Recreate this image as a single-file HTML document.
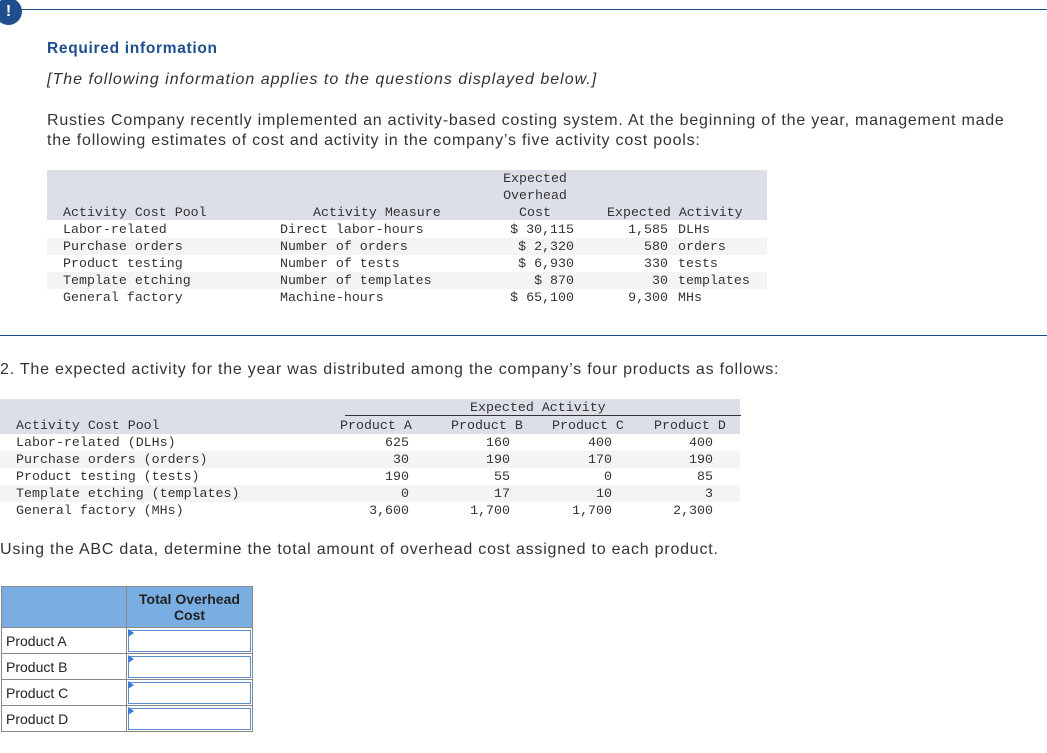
<!DOCTYPE html>
<html><head><style>
body{margin:0;width:1047px;height:753px;position:relative;background:#fff;font-family:"Liberation Sans",sans-serif;color:#333;overflow:hidden}
.a{position:absolute;white-space:nowrap}
.m{font-family:"Liberation Mono",monospace;font-size:13.3px;color:#333;line-height:17px}
.r{text-align:right}
.t{font-size:16px;letter-spacing:0.78px}
</style></head><body>
<div class="a" style="left:20px;top:9px;width:1027px;height:1px;background:#1f4e8c"></div>
<div class="a" style="left:-5px;top:-2px;width:27px;height:27px;border-radius:50%;background:#1f4e8c;color:#fff;font-weight:bold;font-size:16px;text-align:center;line-height:27px">!</div>
<div class="a" style="left:47px;top:40px;font-size:15.5px;font-weight:bold;color:#1f4e8c;letter-spacing:0.7px">Required information</div>
<div class="a t" style="left:47px;top:71px;font-style:italic;letter-spacing:1.0px">[The following information applies to the questions displayed below.]</div>
<div class="a t" style="left:47px;top:111px;line-height:20px">Rusties Company recently implemented an activity-based costing system. At the beginning of the year, management made<br>the following estimates of cost and activity in the company’s five activity cost pools:</div>

<div class="a" style="left:47px;top:170px;width:720px;height:50px;background:#dcdfe8"></div>
<div class="a" style="left:47px;top:238px;width:720px;height:17px;background:#f4f4f4"></div>
<div class="a" style="left:47px;top:272px;width:720px;height:17px;background:#f4f4f4"></div>
<div class="a m" style="left:490px;top:170px;width:90px;text-align:center">Expected<br>Overhead<br>Cost</div>
<div class="a m" style="left:63px;top:204px">Activity Cost Pool<br>Labor-related<br>Purchase orders<br>Product testing<br>Template etching<br>General factory</div>
<div class="a m" style="left:313px;top:204px">Activity Measure</div>
<div class="a m" style="left:280px;top:221px">Direct labor-hours<br>Number of orders<br>Number of tests<br>Number of templates<br>Machine-hours</div>
<div class="a m" style="left:500px;top:221px;width:74px;text-align:right">$ 30,115<br>$ 2,320<br>$ 6,930<br>$ 870<br>$ 65,100</div>
<div class="a m" style="left:607px;top:204px">Expected Activity</div>
<div class="a m" style="left:600px;top:221px;width:68px;text-align:right">1,585<br>580<br>330<br>30<br>9,300</div>
<div class="a m" style="left:678px;top:221px">DLHs<br>orders<br>tests<br>templates<br>MHs</div>

<div class="a" style="left:-10px;top:320px;width:1060px;height:15px;border-bottom:1px solid #1f4e8c;border-left:1px solid #1f4e8c;border-bottom-left-radius:10px"></div>

<div class="a t" style="left:0;top:361px">2. The expected activity for the year was distributed among the company’s four products as follows:</div>

<div class="a" style="left:0;top:399px;width:740px;height:35px;background:#dcdfe8"></div>
<div class="a" style="left:345px;top:415px;width:396px;height:1px;background:#333"></div>
<div class="a" style="left:0;top:451px;width:740px;height:17px;background:#f4f4f4"></div>
<div class="a" style="left:0;top:485px;width:740px;height:17px;background:#f4f4f4"></div>
<div class="a m" style="left:470px;top:399px">Expected Activity</div>
<div class="a m" style="left:16px;top:417px">Activity Cost Pool<br>Labor-related (DLHs)<br>Purchase orders (orders)<br>Product testing (tests)<br>Template etching (templates)<br>General factory (MHs)</div>
<div class="a m" style="left:340px;top:417px">Product A</div>
<div class="a m" style="left:451px;top:417px">Product B</div>
<div class="a m" style="left:552px;top:417px">Product C</div>
<div class="a m" style="left:654px;top:417px">Product D</div>
<div class="a m r" style="left:340px;top:434px;width:69px">625<br>30<br>190<br>0<br>3,600</div>
<div class="a m r" style="left:440px;top:434px;width:70px">160<br>190<br>55<br>17<br>1,700</div>
<div class="a m r" style="left:540px;top:434px;width:72px">400<br>170<br>0<br>10<br>1,700</div>
<div class="a m r" style="left:640px;top:434px;width:73px">400<br>190<br>85<br>3<br>2,300</div>

<div class="a t" style="left:0;top:541px">Using the ABC data, determine the total amount of overhead cost assigned to each product.</div>

<table class="a" style="left:1px;top:586px;border-collapse:collapse;font-size:14px;color:#222">
<tr style="background:#7aaee3;height:41px"><td style="width:122px;border:1px solid #888"></td><td style="width:123px;border:1px solid #888;text-align:center;font-weight:bold;line-height:16px">Total Overhead<br>Cost</td></tr>
<tr style="height:26px"><td style="border:1px solid #888;padding-left:4px">Product A</td><td style="border:1px solid #888;position:relative"><div style="position:absolute;left:1px;top:2px;right:1px;bottom:1px;border:1px solid #5b8fd0"></div><div style="position:absolute;left:1px;top:1px;border-left:6px solid #3a7bd5;border-top:4px solid transparent;border-bottom:4px solid transparent"></div></td></tr>
<tr style="height:26px"><td style="border:1px solid #888;padding-left:4px">Product B</td><td style="border:1px solid #888;position:relative"><div style="position:absolute;left:1px;top:2px;right:1px;bottom:1px;border:1px solid #5b8fd0"></div><div style="position:absolute;left:1px;top:1px;border-left:6px solid #3a7bd5;border-top:4px solid transparent;border-bottom:4px solid transparent"></div></td></tr>
<tr style="height:26px"><td style="border:1px solid #888;padding-left:4px">Product C</td><td style="border:1px solid #888;position:relative"><div style="position:absolute;left:1px;top:2px;right:1px;bottom:1px;border:1px solid #5b8fd0"></div><div style="position:absolute;left:1px;top:1px;border-left:6px solid #3a7bd5;border-top:4px solid transparent;border-bottom:4px solid transparent"></div></td></tr>
<tr style="height:26px"><td style="border:1px solid #888;padding-left:4px">Product D</td><td style="border:1px solid #888;position:relative"><div style="position:absolute;left:1px;top:2px;right:1px;bottom:1px;border:1px solid #5b8fd0"></div><div style="position:absolute;left:1px;top:1px;border-left:6px solid #3a7bd5;border-top:4px solid transparent;border-bottom:4px solid transparent"></div></td></tr>
</table>
</body></html>
